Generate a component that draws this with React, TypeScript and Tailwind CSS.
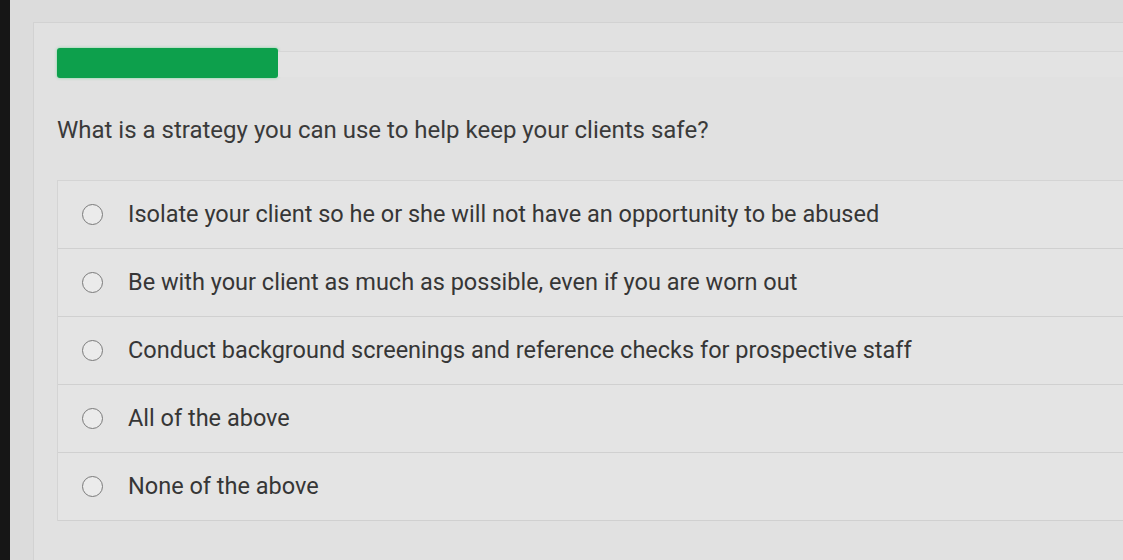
import React from 'react';

const OPTIONS = [
  'Isolate your client so he or she will not have an opportunity to be abused',
  'Be with your client as much as possible, even if you are worn out',
  'Conduct background screenings and reference checks for prospective staff',
  'All of the above',
  'None of the above',
];

export default function App() {
  return (
    <div className="flex h-[560px] w-[1123px] overflow-hidden bg-[#dcdcdc]" style={{ fontFamily: 'Roboto, "Noto Sans", sans-serif' }}>
      {/* screen bezel */}
      <div className="w-[10px] shrink-0 bg-[#161616]" />
      <div className="flex-1 pl-[23px] pt-[22px]">
        <div className="h-full border-l border-t border-[#d2d2d2] bg-[#e1e1e1] pl-[23px] pt-[25px]">
          {/* progress */}
          <div className="flex h-[30px] items-start">
            <div className="h-[30px] w-[221px] rounded-[3px] bg-[#0da04c] shadow-[0_0_3px_rgba(20,200,90,0.5)]" />
            <div className="mt-[3px] h-[26px] flex-1 border-t border-[#d6d6d6] bg-[#e3e3e3]" />
          </div>

          <h1 className="mt-[37px] text-[24px] leading-[30px] text-[#3a3a3a]">
            What is a strategy you can use to help keep your clients safe?
          </h1>

          <div className="mt-[35px] border-l border-t border-[#d4d4d4] bg-[#e4e4e4]">
            {OPTIONS.map((option) => (
              <label
                key={option}
                className="flex h-[68px] items-center border-b border-[#d0d0d0] pl-[24px]"
              >
                <span className="h-[21px] w-[21px] shrink-0 rounded-full border-[1.5px] border-[#7a7a7a] bg-[#ebebeb]" />
                <span className="ml-[25px] text-[23.5px] text-[#363636]">{option}</span>
              </label>
            ))}
          </div>
        </div>
      </div>
    </div>
  );
}
